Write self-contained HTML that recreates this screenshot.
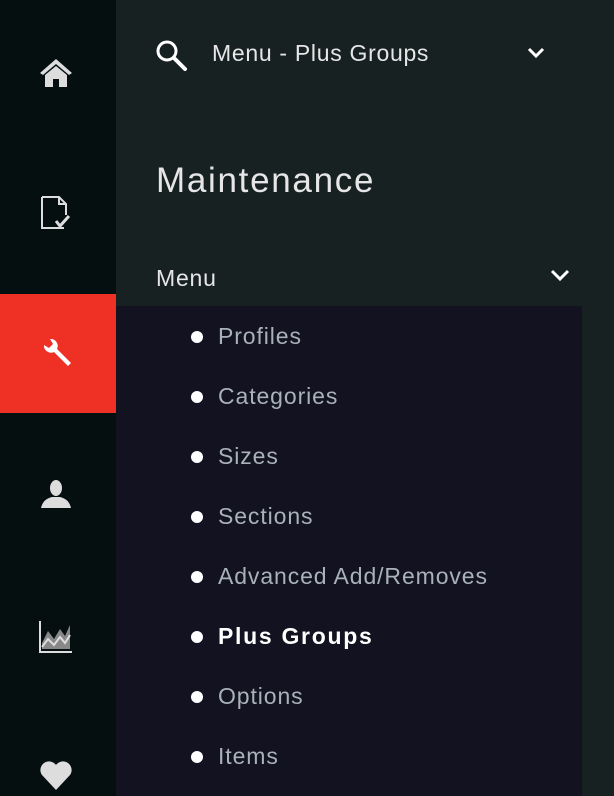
<!DOCTYPE html>
<html><head><meta charset="utf-8"><style>
html,body{margin:0;padding:0;}
body{width:614px;height:796px;background:#172122;position:relative;overflow:hidden;font-family:"Liberation Sans",sans-serif;}
.side{position:absolute;left:0;top:0;width:116px;height:796px;background:#050f0f;}
.red{position:absolute;left:0;top:294px;width:116px;height:119px;background:#ee3124;}
.ic{position:absolute;left:38px;width:36px;height:36px;}
.t{position:absolute;color:#e6e6e6;white-space:nowrap;}
.panel{position:absolute;left:116px;top:306px;width:466px;height:490px;background:#121220;}
.it{position:absolute;left:218px;font-size:23px;color:#a9b1b9;line-height:1;letter-spacing:0.9px;}
.dot{position:absolute;left:191px;width:12px;height:12px;border-radius:50%;background:#fff;}
</style></head><body>
<div class="side"></div>
<div class="red"></div>
<svg class="ic" style="top:55px" viewBox="0 0 36 36"><path d="M18 4 L2 18 L5 20 L18 9 L31 20 L34 18 Z" fill="#ddd"/><path d="M7 20 L18 11 L29 20 V32 H21 V24 H15 V32 H7 Z" fill="#ddd"/></svg>
<svg class="ic" style="top:195px" viewBox="0 0 36 36"><path d="M4 2 H21 L28 9 V20 M26 33 H4 V2" fill="none" stroke="#ddd" stroke-width="2"/><path d="M21 2 V9 H28" fill="none" stroke="#ddd" stroke-width="2"/><path d="M18 26 L22 31 L31 21" fill="none" stroke="#ddd" stroke-width="3"/></svg>
<svg class="ic" style="top:335px" viewBox="0 0 36 36"><path d="M6 10 A7 7 0 0 0 16 17 L30 31 L33 28 L19 14 A7 7 0 0 0 12 4 L15 9 L11 13 Z" fill="#fff"/></svg>
<svg class="ic" style="top:477px" viewBox="0 0 36 36"><ellipse cx="18" cy="11" rx="6" ry="8" fill="#ddd"/><path d="M3 31 Q5 22 14 20 L22 20 Q31 22 33 31 Z" fill="#ddd"/></svg>
<svg class="ic" style="top:617px" viewBox="0 0 36 36"><path d="M2 4 V35 H34" fill="none" stroke="#ddd" stroke-width="2"/><path d="M4 26 L10 14 L16 22 L22 12 L27 19 L32 8 V32 H4 Z" fill="#888"/><path d="M4 30 L10 22 L16 28 L22 20 L27 26 L32 18" fill="none" stroke="#ddd" stroke-width="2"/></svg>
<svg class="ic" style="top:757px" viewBox="0 0 36 36"><path d="M18 33 L4 18 A8 8 0 0 1 18 8 A8 8 0 0 1 32 18 Z" fill="#ddd"/></svg>

<svg style="position:absolute;left:154px;top:38px" width="36" height="36" viewBox="0 0 36 36"><circle cx="13" cy="13" r="9" fill="none" stroke="#fff" stroke-width="3"/><path d="M20 20 L31 31" stroke="#fff" stroke-width="4" stroke-linecap="round"/></svg>
<div class="t" style="left:212px;top:40px;font-size:23px;letter-spacing:0.7px;">Menu - Plus Groups</div>
<svg style="position:absolute;left:526px;top:46px" width="20" height="14" viewBox="0 0 20 14"><path d="M3 3 L10 10 L17 3" fill="none" stroke="#fff" stroke-width="3"/></svg>
<div class="t" style="left:156px;top:161px;font-size:35px;letter-spacing:1.7px;">Maintenance</div>
<div class="t" style="left:156px;top:265px;font-size:23px;letter-spacing:0.8px;">Menu</div>
<svg style="position:absolute;left:549px;top:268px" width="22" height="14" viewBox="0 0 22 14"><path d="M3 3 L11 11 L19 3" fill="none" stroke="#fff" stroke-width="3"/></svg>
<div class="panel"></div>
<div class="dot" style="top:331px"></div><div class="it" style="top:325px">Profiles</div>
<div class="dot" style="top:391px"></div><div class="it" style="top:385px">Categories</div>
<div class="dot" style="top:451px"></div><div class="it" style="top:445px">Sizes</div>
<div class="dot" style="top:511px"></div><div class="it" style="top:505px">Sections</div>
<div class="dot" style="top:571px"></div><div class="it" style="top:565px">Advanced Add/Removes</div>
<div class="dot" style="top:631px"></div><div class="it" style="top:625px;color:#fff;font-weight:bold;letter-spacing:1.7px">Plus Groups</div>
<div class="dot" style="top:691px"></div><div class="it" style="top:685px">Options</div>
<div class="dot" style="top:751px"></div><div class="it" style="top:745px">Items</div>
</body></html>
